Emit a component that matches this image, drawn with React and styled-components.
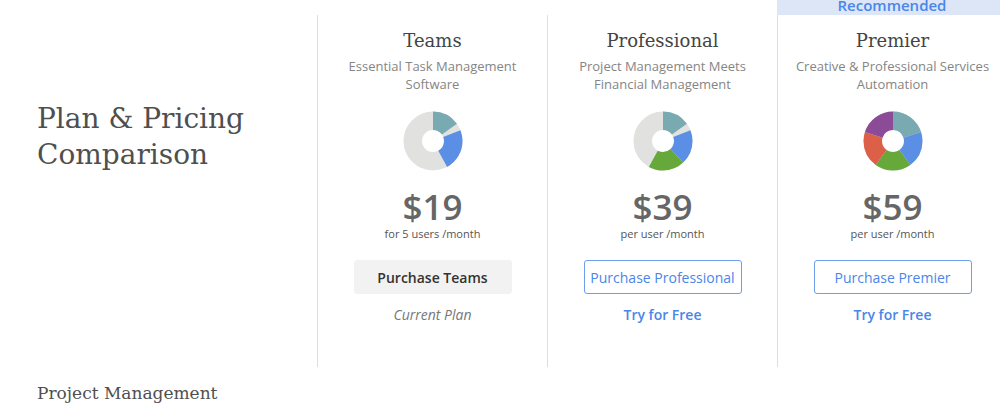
import React from 'react'
import styled, { createGlobalStyle } from 'styled-components'

const Global = createGlobalStyle`
  body {
    margin: 0;
    background: #fff;
    font-family: "Open Sans", "Liberation Sans", sans-serif;
    overflow: hidden;
  }
`;

const plans = [
  {
    name: 'Teams',
    desc: ['Essential Task Management', 'Software'],
    price: '$19',
    per: 'for 5 users /month',
    button: 'Purchase Teams',
    current: true,
    segments: [['#79a9b1', 0, 15], ['#5a8fe5', 19, 23]],
  },
  {
    name: 'Professional',
    desc: ['Project Management Meets', 'Financial Management'],
    price: '$39',
    per: 'per user /month',
    button: 'Purchase Professional',
    segments: [['#79a9b1', 0, 15], ['#5a8fe5', 19, 19], ['#67a83b', 38, 20]],
  },
  {
    name: 'Premier',
    desc: ['Creative & Professional Services', 'Automation'],
    price: '$59',
    per: 'per user /month',
    button: 'Purchase Premier',
    recommended: true,
    segments: [
      ['#79a9b1', 0, 20],
      ['#5a8fe5', 20, 20],
      ['#67a83b', 40, 20],
      ['#dc6048', 60, 20],
      ['#8c4b97', 80, 20],
    ],
  },
];

function Donut({ segments }) {
  return (
    <DonutSvg width="60" height="60" viewBox="0 0 60 60">
      <g transform="rotate(-90 30 30)">
        <circle cx="30" cy="30" r="20.25" fill="none" stroke="#e1e1e0" strokeWidth="18.5" />
        {segments.map(([color, start, len]) => (
          <circle
            key={color + start}
            cx="30"
            cy="30"
            r="20.25"
            fill="none"
            stroke={color}
            strokeWidth="18.5"
            pathLength="100"
            strokeDasharray={`${len} ${100 - len}`}
            strokeDashoffset={-start}
          />
        ))}
      </g>
    </DonutSvg>
  );
}

export default function App() {
  return (
    <>
      <Global />
      <Page>
        <Table>
          <BandCell />
          {plans.map(p => (
            <BandCell key={p.name} $active={p.recommended}>
              {p.recommended && 'Recommended'}
            </BandCell>
          ))}
          <Intro>
            <Heading>Plan &amp; Pricing<br />Comparison</Heading>
          </Intro>
          {plans.map(p => (
            <PlanColumn key={p.name}>
              <PlanName>{p.name}</PlanName>
              <PlanDesc>
                {p.desc[0]}
                <br />
                {p.desc[1]}
              </PlanDesc>
              <Donut segments={p.segments} />
              <Price>{p.price}</Price>
              <Per>{p.per}</Per>
              <PurchaseButton $current={p.current}>{p.button}</PurchaseButton>
              {p.current ? <CurrentPlan>Current Plan</CurrentPlan> : <TryLink>Try for Free</TryLink>}
            </PlanColumn>
          ))}
        </Table>
        <Section>Project Management</Section>
      </Page>
    </>
  );
}

const Page = styled.div`
  width: 1000px;
  height: 414px;
  overflow: hidden;
`;

const Table = styled.div`
  display: grid;
  grid-template-columns: 317px 230px 230px 230px;
  grid-template-rows: 15px 352px;
`;

const BandCell = styled.div`
  background: ${p => (p.$active ? '#dce6f7' : 'transparent')};
  color: #4a86e8;
  font-size: 15px;
  font-weight: 600;
  line-height: 10px;
  text-align: center;
`;

const Intro = styled.div`
  padding: 86px 0 0 37px;
`;

const Heading = styled.h1`
  margin: 0;
  font-family: "DejaVu Serif", "Liberation Serif", serif;
  font-weight: normal;
  font-size: 28px;
  line-height: 36px;
  color: #4f4f4f;
`;

const PlanColumn = styled.div`
  border-left: 1px solid #dedede;
  display: flex;
  flex-direction: column;
  align-items: center;
  padding-top: 13px;
`;

const PlanName = styled.h2`
  margin: 0;
  font-family: "DejaVu Serif", "Liberation Serif", serif;
  font-weight: normal;
  font-size: 18px;
  line-height: 26px;
  color: #444;
`;

const PlanDesc = styled.p`
  margin: 3px 0 0;
  font-size: 13px;
  line-height: 18px;
  color: #858585;
  text-align: center;
`;

const DonutSvg = styled.svg`
  display: block;
  margin-top: 18px;
`;

const Price = styled.div`
  margin-top: 16px;
  font-size: 35px;
  font-weight: 600;
  line-height: 40px;
  color: #666;
`;

const Per = styled.div`
  font-size: 11px;
  line-height: 14px;
  color: #555;
`;

const PurchaseButton = styled.button`
  margin-top: 19px;
  width: 158px;
  height: 34px;
  padding: 0;
  white-space: nowrap;
  box-sizing: border-box;
  border-radius: 3px;
  font-family: "Open Sans", "Liberation Sans", sans-serif;
  font-size: 14px;
  cursor: pointer;
  border: 1px solid ${p => (p.$current ? '#f2f2f2' : '#6d9eea')};
  background: ${p => (p.$current ? '#f2f2f2' : '#fff')};
  color: ${p => (p.$current ? '#333' : '#4a86e8')};
  font-weight: ${p => (p.$current ? 600 : 400)};
`;

const CurrentPlan = styled.div`
  margin-top: 11px;
  font-size: 14px;
  line-height: 20px;
  font-style: italic;
  color: #777;
`;

const TryLink = styled.a`
  margin-top: 11px;
  font-size: 14px;
  line-height: 20px;
  font-weight: 600;
  color: #4a86e8;
  cursor: pointer;
`;

const Section = styled.h3`
  margin: 14px 0 0 37px;
  font-family: "DejaVu Serif", "Liberation Serif", serif;
  font-weight: normal;
  font-size: 17px;
  line-height: 24px;
  color: #4f4f4f;
`;
